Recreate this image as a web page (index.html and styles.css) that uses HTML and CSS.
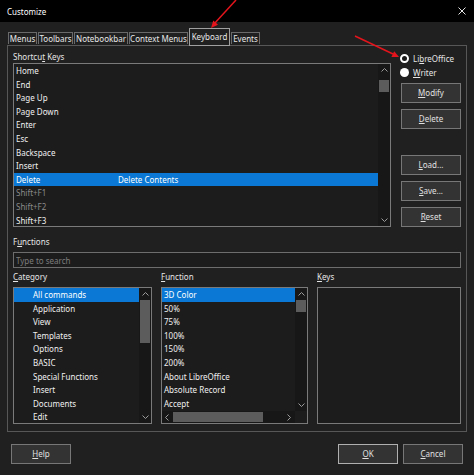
FILE: index.html
```html
<!DOCTYPE html>
<html lang="en">
<head>
    <meta charset="UTF-8">
    <title>Customize</title>
    <link rel="stylesheet" href="styles.css">
</head>
<body>
    <div class="titlebar">
        <span>Customize</span>
        <svg class="close" width="8" height="8" viewBox="0 0 8 8"><path d="M0.5 0.5 L7.5 7.5 M7.5 0.5 L0.5 7.5" stroke="#fff" stroke-width="0.9"/></svg>
    </div>

    <div class="tabs">
        <div class="tab w-menus">Menus</div>
        <div class="tab w-toolbars">Toolbars</div>
        <div class="tab w-notebook">Notebookbar</div>
        <div class="tab w-context">Context Menus</div>
        <div class="tab w-keyboard active">Keyboard</div>
        <div class="tab w-events">Events</div>
    </div>

    <div class="panel">
        <div class="top">
            <div class="keys-col">
                <div class="label">Shortcu<u>t</u> Keys</div>
                <div class="listbox shortcut-list">
                    <div class="rows">
                        <div class="row">Home</div>
                        <div class="row">End</div>
                        <div class="row">Page Up</div>
                        <div class="row">Page Down</div>
                        <div class="row">Enter</div>
                        <div class="row">Esc</div>
                        <div class="row">Backspace</div>
                        <div class="row">Insert</div>
                        <div class="row selected"><span class="key">Delete</span><span>Delete Contents</span></div>
                        <div class="row dim">Shift+F1</div>
                        <div class="row dim">Shift+F2</div>
                        <div class="row">Shift+F3</div>
                    </div>
                    <div class="vscroll">
                        <div class="arrow"><svg width="7" height="4" viewBox="0 0 7 4"><polyline points="0.5,3.5 3.5,0.5 6.5,3.5" fill="none" stroke="#9a9a9a" stroke-width="1"/></svg></div>
                        <div class="thumb thumb-shortcut"></div>
                        <div class="spacer"></div>
                        <div class="arrow"><svg width="7" height="4" viewBox="0 0 7 4"><polyline points="0.5,0.5 3.5,3.5 6.5,0.5" fill="none" stroke="#9a9a9a" stroke-width="1"/></svg></div>
                    </div>
                </div>
            </div>

            <div class="side">
                <div class="radio"><span class="dot on"></span><span>Li<u>b</u>reOffice</span></div>
                <div class="radio"><span class="dot filled"></span><span><u>W</u>riter</span></div>
                <div class="btn first"><u>M</u>odify</div>
                <div class="btn"><u>D</u>elete</div>
                <div class="btn gap-big"><u>L</u>oad...</div>
                <div class="btn"><u>S</u>ave...</div>
                <div class="btn"><u>R</u>eset</div>
            </div>
        </div>

        <div class="label functions-label">F<u>u</u>nctions</div>
        <input class="search" type="text" placeholder="Type to search">

        <div class="bottom">
            <div class="col col-category">
                <div class="label"><u>C</u>ategory</div>
                <div class="listbox tall">
                    <div class="rows">
                        <div class="row indent selected">All commands</div>
                        <div class="row indent">Application</div>
                        <div class="row indent">View</div>
                        <div class="row indent">Templates</div>
                        <div class="row indent">Options</div>
                        <div class="row indent">BASIC</div>
                        <div class="row indent">Special Functions</div>
                        <div class="row indent">Insert</div>
                        <div class="row indent">Documents</div>
                        <div class="row indent">Edit</div>
                    </div>
                    <div class="vscroll">
                        <div class="arrow"><svg width="7" height="4" viewBox="0 0 7 4"><polyline points="0.5,3.5 3.5,0.5 6.5,3.5" fill="none" stroke="#9a9a9a" stroke-width="1"/></svg></div>
                        <div class="thumb thumb-category"></div>
                        <div class="spacer"></div>
                        <div class="arrow"><svg width="7" height="4" viewBox="0 0 7 4"><polyline points="0.5,0.5 3.5,3.5 6.5,0.5" fill="none" stroke="#9a9a9a" stroke-width="1"/></svg></div>
                    </div>
                </div>
            </div>

            <div class="col col-function">
                <div class="label"><u>F</u>unction</div>
                <div class="listbox tall func-list">
                    <div class="func-main">
                        <div class="rows">
                            <div class="row selected">3D Color</div>
                            <div class="row">50%</div>
                            <div class="row">75%</div>
                            <div class="row">100%</div>
                            <div class="row">150%</div>
                            <div class="row">200%</div>
                            <div class="row">About LibreOffice</div>
                            <div class="row">Absolute Record</div>
                            <div class="row">Accept</div>
                        </div>
                        <div class="vscroll">
                            <div class="arrow"><svg width="7" height="4" viewBox="0 0 7 4"><polyline points="0.5,3.5 3.5,0.5 6.5,3.5" fill="none" stroke="#9a9a9a" stroke-width="1"/></svg></div>
                            <div class="thumb thumb-function"></div>
                            <div class="spacer"></div>
                            <div class="arrow"><svg width="7" height="4" viewBox="0 0 7 4"><polyline points="0.5,0.5 3.5,3.5 6.5,0.5" fill="none" stroke="#9a9a9a" stroke-width="1"/></svg></div>
                        </div>
                    </div>
                    <div class="hscroll">
                        <div class="harrow"><svg width="4" height="7" viewBox="0 0 4 7"><polyline points="3.5,0.5 0.5,3.5 3.5,6.5" fill="none" stroke="#9a9a9a" stroke-width="1"/></svg></div>
                        <div class="hthumb"></div>
                        <div class="spacer"></div>
                        <div class="harrow right"><svg width="4" height="7" viewBox="0 0 4 7"><polyline points="0.5,0.5 3.5,3.5 0.5,6.5" fill="none" stroke="#9a9a9a" stroke-width="1"/></svg></div>
                        <div class="corner"></div>
                    </div>
                </div>
            </div>

            <div class="col col-keys">
                <div class="label"><u>K</u>eys</div>
                <div class="listbox tall"></div>
            </div>
        </div>
    </div>

    <div class="footer">
        <div class="btn"><u>H</u>elp</div>
        <div class="footer-right">
            <div class="btn default"><u>O</u>K</div>
            <div class="btn"><u>C</u>ancel</div>
        </div>
    </div>

    <svg class="annotations" width="474" height="475" viewBox="0 0 474 475">
        <line x1="236" y1="0" x2="214" y2="24" stroke="#e3141c" stroke-width="1.5"/>
        <polygon points="211,28 218,24.8 213.3,20.6" fill="#e3141c"/>
        <line x1="355" y1="36" x2="393" y2="54" stroke="#e3141c" stroke-width="1.5"/>
        <polygon points="399,57 391.4,57 394.2,51.2" fill="#e3141c"/>
    </svg>
</body>
</html>
```

FILE: styles.css
```css
/* Dialog */
body {
    margin: 0;
    width: 474px;
    height: 475px;
    overflow: hidden;
    position: relative;
    background-color: #202020;
    font-family: "Noto Sans", sans-serif;
    font-size: 8px;
    color: #f0f0f0;
}

.titlebar {
    height: 22px;
    background-color: #000;
    display: flex;
    align-items: center;
    justify-content: space-between;
    padding: 0 8px 0 7px;
    color: #fff;
}

/* Tabs */
.tabs {
    display: flex;
    align-items: flex-end;
    gap: 1px;
    height: 18px;
    margin-top: 5px;
    padding-left: 8px;
}

.tab {
    height: 12px;
    line-height: 11px;
    border: 1px solid #6a6a6a;
    border-bottom-width: 0;
    box-sizing: border-box;
    text-align: center;
    color: #e8e8e8;
    margin-bottom: 1px;
    white-space: nowrap;
}

.tab.active {
    height: 18px;
    line-height: 16px;
    border: 1px solid #a0a0a0;
    margin-bottom: -1px;
    position: relative;
    z-index: 1;
    background-color: #202020;
}

.w-menus { width: 29px; }
.w-toolbars { width: 35px; }
.w-notebook { width: 54px; }
.w-context { width: 59px; }
.w-keyboard { width: 41px; }
.w-events { width: 29px; }

.panel {
    margin: 0 7px;
    border: 1px solid #575757;
    padding: 5px 5px 7px 5px;
}

.label {
    height: 12px;
    line-height: 12px;
    color: #e6e6e6;
}

/* Top area */
.top {
    display: flex;
    gap: 9px;
}

.keys-col {
    width: 378px;
}

.listbox {
    border: 1px solid #7a7a7a;
    background-color: #1c1c1c;
    box-sizing: border-box;
    display: flex;
    overflow: hidden;
}

.shortcut-list {
    height: 164px;
}

.rows {
    flex: 1;
    overflow: hidden;
}

.row {
    height: 13.6px;
    line-height: 13.6px;
    padding-left: 2px;
    white-space: nowrap;
    display: flex;
}

.row.selected {
    background-color: #0a78d4;
    color: #fff;
}

.row.dim {
    color: #8a8a8a;
}

.row.indent {
    padding-left: 19px;
}

.key {
    width: 102px;
}

.vscroll {
    width: 12px;
    background-color: #171717;
    display: flex;
    flex-direction: column;
}

.arrow {
    height: 12px;
    display: flex;
    align-items: center;
    justify-content: center;
}

.thumb {
    margin: 0 1px;
    background-color: #5c5c5c;
}

.thumb-shortcut {
    margin-top: 4px;
    height: 12px;
}

.thumb-category {
    height: 43px;
}

.thumb-function {
    height: 12px;
}

.spacer {
    flex: 1;
}

/* Side buttons */
.side {
    width: 61px;
}

.radio {
    height: 14px;
    display: flex;
    align-items: center;
    gap: 4px;
    color: #e6e6e6;
}

.dot {
    width: 9px;
    height: 9px;
    border-radius: 50%;
    box-sizing: border-box;
    background-color: #fff;
}

.dot.on {
    border: 2.5px solid #fff;
    background-color: #1a1a1a;
}

.btn {
    width: 60px;
    height: 20px;
    line-height: 18px;
    box-sizing: border-box;
    border: 1px solid #777;
    background-color: #333;
    color: #e0e0e0;
    text-align: center;
    margin-top: 6px;
}

.side .btn {
    margin-left: 1px;
}

.side .btn.first {
    margin-top: 4px;
}

.side .btn.gap-big {
    margin-top: 26px;
}

/* Functions */
.functions-label {
    margin-top: 9px;
}

.search {
    display: block;
    width: 100%;
    height: 16px;
    margin: 4px 0 0 0;
    padding: 0 0 0 2px;
    box-sizing: border-box;
    border: 1px solid #6d6d6d;
    background-color: #1c1c1c;
    color: #fff;
    font-family: "Noto Sans", sans-serif;
    font-size: 8px;
    outline: none;
}

.search::placeholder {
    color: #7c7c7c;
}

.bottom {
    display: flex;
    gap: 9px;
    margin-top: 3px;
}

.col-category { width: 139px; }
.col-function { width: 147px; }
.col-keys { width: 144px; }

.tall {
    height: 137px;
    margin-top: 4px;
}

.func-list {
    flex-direction: column;
}

.func-main {
    flex: 1;
    display: flex;
    overflow: hidden;
}

.hscroll {
    height: 12px;
    display: flex;
    background-color: #171717;
}

.harrow {
    width: 10px;
    display: flex;
    align-items: center;
    justify-content: center;
}

.harrow.right {
    width: 12px;
}

.hthumb {
    width: 90px;
    margin: 1px 0 1px 1px;
    background-color: #5c5c5c;
}

.corner {
    width: 12px;
    background-color: #1c1c1c;
}

/* Footer */
.footer {
    display: flex;
    justify-content: space-between;
    padding: 0 11px;
    margin-top: 12px;
}

.footer .btn {
    margin-top: 0;
}

.footer-right {
    display: flex;
    gap: 5px;
}

.btn.default {
    border-color: #b0b0b0;
}

.annotations {
    position: absolute;
    top: 0;
    left: 0;
    pointer-events: none;
    z-index: 5;
}
```
